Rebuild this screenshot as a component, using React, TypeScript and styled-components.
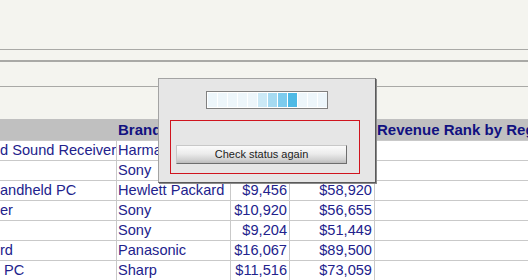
import React from "react";
import styled, { createGlobalStyle } from "styled-components";

const Global = createGlobalStyle`
  html, body { margin: 0; padding: 0; background: #f4f4ef; }
  body { font-family: "Liberation Sans", Arial, sans-serif; }
`;

const Page = styled.div`
  position: relative;
  width: 528px;
  height: 280px;
  overflow: hidden;
  background: #f4f4ef;
`;

const TopArea = styled.div`
  display: flex;
  flex-direction: column;
  height: 119px;
`;

const Spacer = styled.div<{ $h: number }>`
  height: ${(p) => p.$h}px;
`;

const Rule = styled.div<{ $w: number }>`
  height: ${(p) => p.$w}px;
  background: #a9a9a6;
`;

const Grid = styled.div`
  display: grid;
  grid-template-columns: 117px 114px 59px 85px 1fr;
  background: #ffffff;
  color: #22228c;
  font-size: 14.6px;
`;

const HeadCell = styled.div<{ $pl?: number }>`
  height: 21px;
  line-height: 21px;
  background: #c0c0c0;
  color: #111180;
  font-weight: bold;
  font-size: 15px;
  padding-left: ${(p) => p.$pl ?? 1}px;
  white-space: nowrap;
  overflow: hidden;
`;

const Cell = styled.div<{ $right?: boolean; $last?: boolean; $first?: boolean }>`
  box-sizing: border-box;
  height: 20px;
  line-height: 19px;
  border-top: 1px solid #c9c9c9;
  border-right: ${(p) => (p.$last ? "none" : "1px solid #c9c9c9")};
  padding: ${(p) => (p.$right ? "0 2px 0 0" : p.$first ? "0" : "0 0 0 1px")};
  text-align: ${(p) => (p.$right ? "right" : "left")};
  white-space: pre;
  overflow: hidden;
`;

const Dialog = styled.div`
  position: absolute;
  left: 158px;
  top: 78px;
  box-sizing: border-box;
  width: 218px;
  height: 105px;
  background: #e6e6e6;
  border: 1px solid #a3a3a3;
  border-right-color: #5a5a5a;
  border-bottom-color: #5a5a5a;
  box-shadow: 1px 1px 0 #8a8a8a;
  display: flex;
  flex-direction: column;
  padding-top: 12px;
`;

const Bar = styled.div`
  align-self: center;
  margin-left: -1px;
  box-sizing: border-box;
  width: 122px;
  height: 18px;
  border: 1px solid #808080;
  background: #ffffff;
  display: flex;
  gap: 1px;
  padding: 1px 0 1px 1px;
`;

const Seg = styled.div<{ $c: string }>`
  width: 9px;
  height: 100%;
  background: ${(p) => p.$c};
`;

const RedBox = styled.div`
  box-sizing: border-box;
  margin-top: 11px;
  margin-left: 11px;
  width: 190px;
  height: 54px;
  border: 1px solid #d0141e;
  padding: 23px 0 0 5px;
`;

const Button = styled.button`
  box-sizing: border-box;
  width: 171px;
  height: 19px;
  padding: 0;
  margin: 0;
  border: 1px solid;
  border-color: #c8c8c8 #6e6e6e #6e6e6e #c8c8c8;
  background: linear-gradient(#fbfbfb 0%, #ececec 45%, #d2d2d2 80%, #bcbcbc 100%);
  font-family: "Liberation Sans", Arial, sans-serif;
  font-size: 11px;
  color: #1c1c1c;
  line-height: 17px;
  text-align: center;
`;

const rows: [string, string, string, string][] = [
  ["d Sound Receiver", "Harman Kardon", "$12,480", "$64,210"],
  ["", "Sony", "$8,735", "$49,870"],
  ["andheld PC", "Hewlett Packard", "$9,456", "$58,920"],
  ["er", "Sony", "$10,920", "$56,655"],
  ["", "Sony", "$9,204", "$51,449"],
  ["rd", "Panasonic", "$16,067", "$89,500"],
  [" PC", "Sharp", "$11,516", "$73,059"],
];

const segColors = [
  "#edf6fb",
  "#edf6fb",
  "#edf6fb",
  "#edf6fb",
  "#edf6fb",
  "#cbe9f6",
  "#a5daf1",
  "#7ccbed",
  "#4db9e5",
  "#edf6fb",
  "#edf6fb",
  "#edf6fb",
];

export default function App() {
  return (
    <Page>
      <Global />
      <TopArea>
        <Spacer $h={49} />
        <Rule $w={1} />
        <Spacer $h={10} />
        <Rule $w={2} />
        <Spacer $h={24} />
        <Rule $w={1} />
      </TopArea>
      <Grid>
        <HeadCell />
        <HeadCell>Brand</HeadCell>
        <HeadCell>Revenue</HeadCell>
        <HeadCell>Total</HeadCell>
        <HeadCell $pl={2}>Revenue Rank by Region</HeadCell>
        {rows.map((r, i) => (
          <React.Fragment key={i}>
            <Cell $first>{r[0]}</Cell>
            <Cell>{r[1]}</Cell>
            <Cell $right>{r[2]}</Cell>
            <Cell $right>{r[3]}</Cell>
            <Cell $last />
          </React.Fragment>
        ))}
      </Grid>
      <Dialog>
        <Bar>
          {segColors.map((c, i) => (
            <Seg key={i} $c={c} />
          ))}
        </Bar>
        <RedBox>
          <Button type="button">Check status again</Button>
        </RedBox>
      </Dialog>
    </Page>
  );
}
